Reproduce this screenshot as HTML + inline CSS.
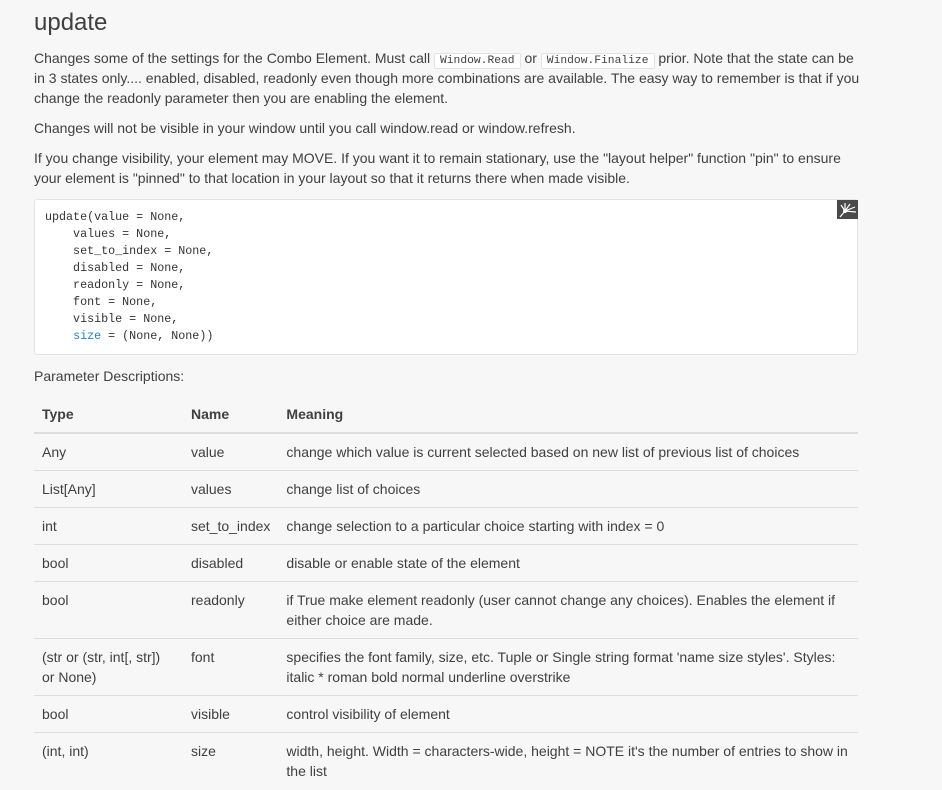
<!DOCTYPE html>
<html><head><style>
body{margin:0;background:#f7f7f7;font-family:"Liberation Sans",Arial,sans-serif;color:#404040;font-size:14px;width:942px;height:790px;overflow:hidden}
h2{position:absolute;left:34px;top:9px;margin:0;font-size:24px;font-weight:normal;color:#404040}
p{position:absolute;left:34px;width:826px;margin:0;line-height:20px}
code.i{font-family:"Liberation Mono",monospace;font-size:11.3px;background:#fff;border:1px solid #e1e4e5;padding:1px 5px;color:#404040;border-radius:2px;line-height:12px}
pre{position:absolute;left:34px;top:199px;width:824px;height:156px;margin:0;background:#fff;border:1px solid #e1e4e5;border-radius:3px;box-sizing:border-box;padding:9px 10px;font-family:"Liberation Mono",monospace;font-size:11.7px;line-height:17px;color:#333}
pre .b{color:#2980b9}
.icon{position:absolute;left:837px;top:200px;width:21px;height:19px;background:#4a4a4a}
table{position:absolute;left:34px;top:395px;width:824px;border-collapse:collapse}
th{text-align:left;font-weight:bold;padding:0 8px;height:37px;border-bottom:2px solid #ddd;font-size:14px}
td{padding:8px;vertical-align:top;line-height:20px;border-top:1px solid #ddd}
</style></head><body>
<h2>update</h2>
<p style="top:48px">Changes some of the settings for the Combo Element. Must call <code class="i">Window.Read</code> or <code class="i">Window.Finalize</code> prior. Note that the state can be in 3 states only.... enabled, disabled, readonly even though more combinations are available. The easy way to remember is that if you change the readonly parameter then you are enabling the element.</p>
<p style="top:118px">Changes will not be visible in your window until you call window.read or window.refresh.</p>
<p style="top:148px">If you change visibility, your element may MOVE. If you want it to remain stationary, use the "layout helper" function "pin" to ensure your element is "pinned" to that location in your layout so that it returns there when made visible.</p>
<pre>update(value = None,
    values = None,
    set_to_index = None,
    disabled = None,
    readonly = None,
    font = None,
    visible = None,
    <span class="b">size</span> = (None, None))</pre>
<div class="icon"><svg width="21" height="19"><g stroke="#fff" stroke-width="1.2" fill="none"><path d="M8 11L4 5M8 11L8 3M8 11L13 4M8 11L18 7M8 11L19 12M8 11L3 17"/></g><circle cx="8" cy="11" r="2" fill="#fff"/></svg></div>
<p style="top:366px">Parameter Descriptions:</p>
<table>
<tr><th style="width:133px">Type</th><th style="width:79px">Name</th><th>Meaning</th></tr>
<tr><td>Any</td><td>value</td><td>change which value is current selected based on new list of previous list of choices</td></tr>
<tr><td>List[Any]</td><td>values</td><td>change list of choices</td></tr>
<tr><td>int</td><td>set_to_index</td><td>change selection to a particular choice starting with index = 0</td></tr>
<tr><td>bool</td><td>disabled</td><td>disable or enable state of the element</td></tr>
<tr><td>bool</td><td>readonly</td><td>if True make element readonly (user cannot change any choices). Enables the element if either choice are made.</td></tr>
<tr><td>(str or (str, int[, str]) or None)</td><td>font</td><td>specifies the font family, size, etc. Tuple or Single string format 'name size styles'. Styles: italic * roman bold normal underline overstrike</td></tr>
<tr><td>bool</td><td>visible</td><td>control visibility of element</td></tr>
<tr><td>(int, int)</td><td>size</td><td>width, height. Width = characters-wide, height = NOTE it's the number of entries to show in the list</td></tr>
</table>
</body></html>
